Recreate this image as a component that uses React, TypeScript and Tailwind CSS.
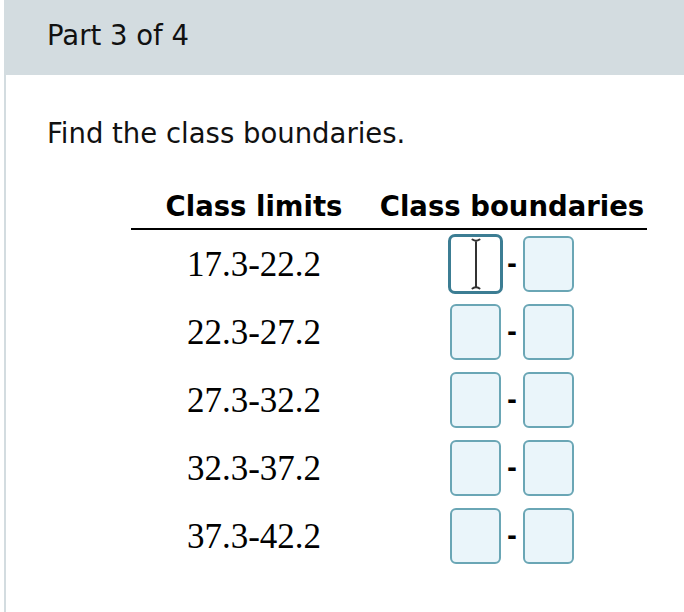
import React from "react";

const rows = ["17.3-22.2", "22.3-27.2", "27.3-32.2", "32.3-37.2", "37.3-42.2"];

function Cursor() {
  return (
    <svg width="10" height="52" viewBox="0 0 10 52" className="text-[#333]">
      <path
        d="M1.5 1.5 Q5 4 8.5 1.5 M5 3 V49 M1.5 50.5 Q5 48 8.5 50.5"
        stroke="currentColor"
        strokeWidth="2"
        fill="none"
        strokeLinecap="round"
      />
    </svg>
  );
}

function AnswerBox({ focused }: { focused?: boolean }) {
  if (focused) {
    return (
      <div className="w-[55px] h-[60px] -mx-[2px] rounded-[7px] border-[3px] border-[#3c7d93] bg-white flex items-center justify-center">
        <Cursor />
      </div>
    );
  }
  return (
    <div className="w-[51px] h-[56px] rounded-[6px] border-2 border-[#6aa6b5] bg-[#eaf5fa]" />
  );
}

export default function App() {
  return (
    <div
      className="w-[684px] h-[612px] bg-white overflow-hidden"
      style={{ fontFamily: '"DejaVu Sans", Verdana, sans-serif' }}
    >
      <div className="ml-[4px] h-full flex flex-col">
        {/* Header */}
        <div className="h-[75px] bg-[#d3dce0] pl-[43px] pt-[19px]">
          <div className="text-[27.5px] leading-[32px] text-[#111]">Part 3 of 4</div>
        </div>

        {/* Body */}
        <div className="flex-1 border-l-2 border-[#d3dce0] pl-[41px] pt-[42px]">
          <div className="text-[27.5px] leading-[32px] text-[#111]">
            Find the class boundaries.
          </div>

          <div className="ml-[84px] mt-[41px] w-[516px]">
            <div className="grid grid-cols-[246px_270px] border-b-2 border-black pb-[6px]">
              <div className="text-center font-bold text-[27.5px] leading-[32px] text-black">
                Class limits
              </div>
              <div className="text-center font-bold text-[27.5px] leading-[32px] text-black">
                Class boundaries
              </div>
            </div>

            {rows.map((r, i) => (
              <div key={r} className="grid grid-cols-[246px_270px] h-[68px] items-center">
                <div
                  className="text-center text-[35px] leading-none text-black"
                  style={{ fontFamily: '"Liberation Serif", "Times New Roman", serif' }}
                >
                  {r}
                </div>
                <div className="flex items-center justify-center gap-[6px]">
                  <AnswerBox focused={i === 0} />
                  <span className="font-bold text-[24px] leading-none text-black">-</span>
                  <AnswerBox />
                </div>
              </div>
            ))}
          </div>
        </div>
      </div>
    </div>
  );
}
